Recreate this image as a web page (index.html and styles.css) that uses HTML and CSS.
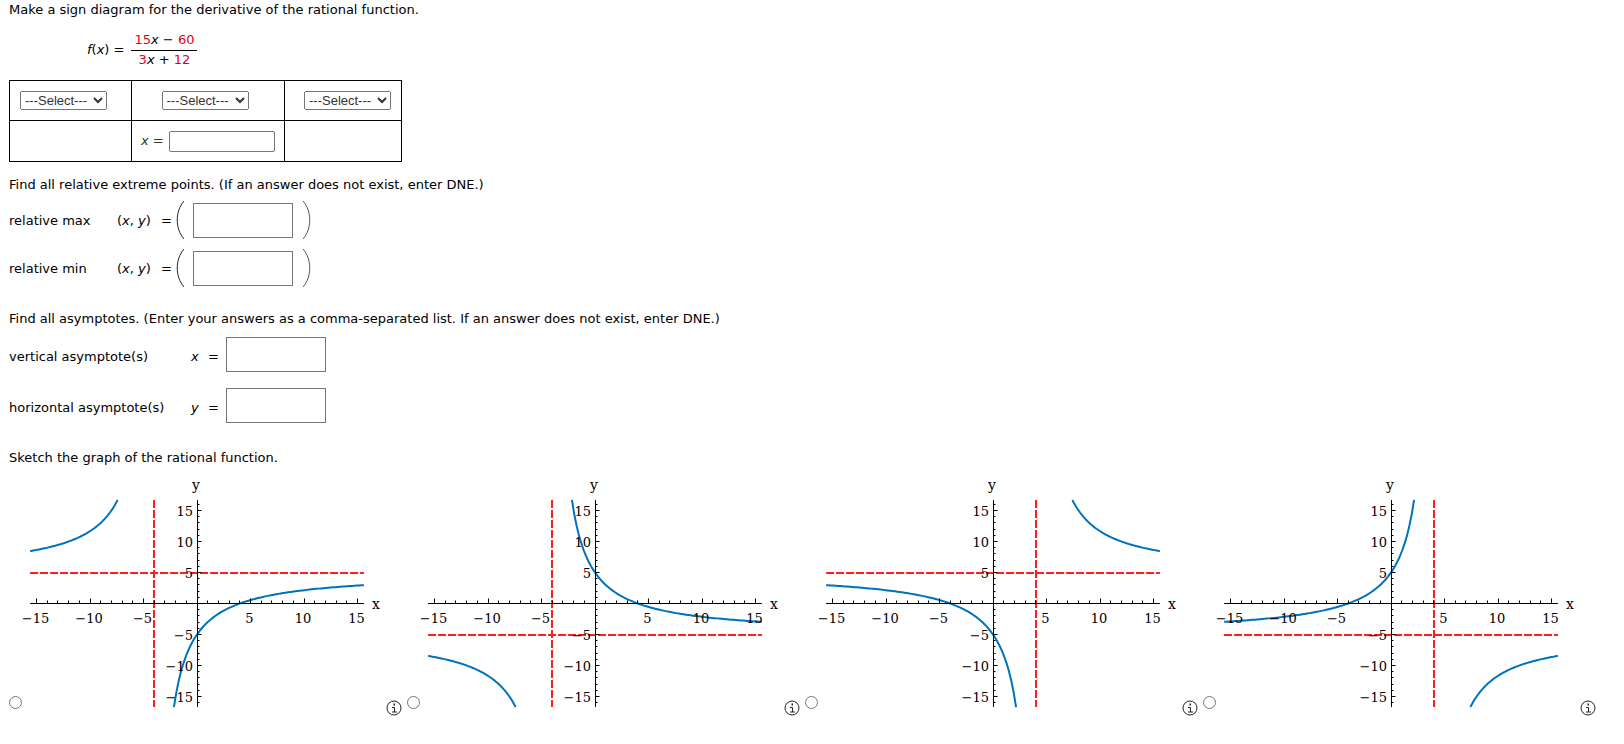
FILE: index.html
```html
<!DOCTYPE html>
<html lang="en">
<head>
<meta charset="utf-8">
<title>Sign diagram for the derivative</title>
<link rel="stylesheet" href="styles.css">
</head>
<body>
<main class="question">
  <p class="prompt">Make a sign diagram for the derivative of the rational function.</p>
  <div class="equation">
    <span><i>f</i>(<i>x</i>) =</span>
    <span class="fraction">
      <span class="numerator"><b>15</b><i>x</i> − <b>60</b></span>
      <span class="denominator"><b>3</b><i>x</i> + <b>12</b></span>
    </span>
  </div>

  <table class="signs">
    <tr>
      <td class="left"><select aria-label="Sign on the left interval"><option>---Select---</option></select></td>
      <td class="middle"><select aria-label="Behavior at the critical value"><option>---Select---</option></select></td>
      <td class="right"><select aria-label="Sign on the right interval"><option>---Select---</option></select></td>
    </tr>
    <tr class="values">
      <td></td>
      <td><div class="critical"><label for="critical"><i>x</i> =</label><input id="critical" type="text"></div></td>
      <td></td>
    </tr>
  </table>

  <p class="prompt extremes-prompt">Find all relative extreme points. (If an answer does not exist, enter DNE.)</p>
  <div class="extremes">
    <div class="point">
      <label class="point-label" for="max">relative max</label>
      <span class="pair">(<i>x</i>, <i>y</i>)</span>
      <span class="equals">=</span>
      <svg class="paren" viewBox="0 0 9 40" aria-hidden="true"><path d="M8 1C-1 11-1 29 8 39"/></svg>
      <input class="answer" id="max" type="text">
      <svg class="paren close" viewBox="0 0 9 40" aria-hidden="true"><path d="M1 1C10 11 10 29 1 39"/></svg>
    </div>
    <div class="point">
      <label class="point-label" for="min">relative min</label>
      <span class="pair">(<i>x</i>, <i>y</i>)</span>
      <span class="equals">=</span>
      <svg class="paren" viewBox="0 0 9 40" aria-hidden="true"><path d="M8 1C-1 11-1 29 8 39"/></svg>
      <input class="answer" id="min" type="text">
      <svg class="paren close" viewBox="0 0 9 40" aria-hidden="true"><path d="M1 1C10 11 10 29 1 39"/></svg>
    </div>
  </div>

  <p class="prompt asymptotes-prompt">Find all asymptotes. (Enter your answers as a comma-separated list. If an answer does not exist, enter DNE.)</p>
  <div class="asymptotes">
    <label for="vertical">vertical asymptote(s)</label><span class="variable"><i>x</i></span><span>=</span><input class="answer" id="vertical" type="text">
    <label for="horizontal">horizontal asymptote(s)</label><span class="variable"><i>y</i></span><span>=</span><input class="answer" id="horizontal" type="text">
  </div>

  <p class="prompt graph-prompt">Sketch the graph of the rational function.</p>
  <div class="choices" id="choices"></div>
</main>
<script src="graphs.js"></script>
</body>
</html>
```
FILE: styles.css
```css
body {
  margin: 0;
  background: #fff;
  color: #000;
  font: 13px/18px "DejaVu Sans", Verdana, sans-serif;
}

.question {
  padding: 1px 9px 24px;
}

.prompt {
  margin: 0;
}

.equation {
  display: flex;
  align-items: center;
  gap: 7px;
  margin: 12px 0 11px 78px;
}

.fraction {
  display: flex;
  flex-direction: column;
  text-align: center;
}

.fraction b {
  color: #e00016;
  font-weight: normal;
}

.numerator {
  padding: 0 3px 1px;
  border-bottom: 1px solid #000;
}

.signs {
  border-collapse: collapse;
  color: #333;
}

.signs td {
  box-sizing: border-box;
  height: 40px;
  padding: 0 9px;
  border: 1px solid #000;
}

.signs .values td {
  height: 41px;
}

.signs .left {
  width: 122px;
  padding-left: 10px;
}

.signs .middle {
  width: 153px;
  padding-right: 15px;
  text-align: center;
}

.signs .right {
  width: 117px;
  padding-right: 10px;
  text-align: right;
}

.signs select {
  width: 87px;
  height: 19px;
  color: #333;
  font: 13px "Liberation Sans", Arial, sans-serif;
}

.critical {
  display: flex;
  align-items: center;
  justify-content: space-between;
}

.critical input {
  box-sizing: border-box;
  width: 106px;
  height: 21px;
  border: 1px solid #767676;
  border-radius: 2px;
}

.extremes-prompt {
  margin-top: 14px;
}

.extremes {
  display: flex;
  flex-direction: column;
  gap: 8px;
  margin-top: 6px;
}

.point {
  display: flex;
  align-items: center;
}

.point label,
.point span {
  padding-top: 2px;
}

.point-label {
  width: 108px;
}

.pair {
  width: 44px;
}

.equals {
  width: 15px;
}

.paren {
  width: 9px;
  height: 40px;
  fill: none;
  stroke: #222;
}

.close {
  stroke: #555;
}

.answer {
  box-sizing: border-box;
  width: 100px;
  height: 35px;
  border: 1px solid #767676;
  border-radius: 0;
}

.point .answer {
  margin: 0 9px 0 8px;
}

.asymptotes-prompt {
  margin-top: 22px;
}

.asymptotes {
  display: grid;
  grid-template-columns: 182px 17px 18px 100px;
  align-items: center;
  row-gap: 16px;
  margin-top: 9px;
}

.asymptotes label,
.asymptotes span {
  padding-top: 4px;
}

.graph-prompt {
  margin-top: 26px;
}

.choices {
  display: flex;
  flex-wrap: wrap;
  gap: 5px;
  margin-top: 9px;
}

.choice {
  display: flex;
  align-items: flex-end;
}

.choice input {
  width: 13px;
  height: 13px;
  margin: 0 0 7px;
}

.graph {
  width: 364px;
  height: 240px;
  overflow: visible;
  font: 13px "DejaVu Serif", serif;
}

.graph .axis {
  fill: none;
  stroke: #000;
}

.graph .curve {
  fill: none;
  stroke: #0072bd;
  stroke-width: 2;
}

.graph .asymptote {
  stroke: #ff1c1c;
  stroke-width: 2;
  stroke-dasharray: 8 2;
}

.graph .name {
  font-size: 14px;
}

.info {
  width: 16px;
  height: 16px;
  padding: 0;
  border: 0;
  background: none;
}

.info svg {
  display: block;
  fill: none;
  stroke: #222;
}
```
FILE: graphs.js
```js
const ORIGIN = { x: 175, y: 127.5 };
const UNIT = { x: 10.7, y: 6.2 };
const LIMIT = { x: 15.6, y: 16.7 };

const graphs = [
  { h: 1, v: 1 },
  { h: 1, v: -1 },
  { h: -1, v: 1 },
  { h: -1, v: -1 }
];

const px = x => ORIGIN.x + x * UNIT.x;
const py = y => ORIGIN.y - y * UNIT.y;
const crisp = n => Math.floor(n) + 0.5;

// Points of y = 5(x - 4)/(x + 4), mirrored by h and v.
function branch(from, to, h, v) {
  const points = [];
  for (let i = 0; i <= 80; i++) {
    const x = from + (to - from) * i / 80;
    const y = 5 * (x - 4) / (x + 4);
    points.push(px(h * x).toFixed(2) + " " + py(v * y).toFixed(2));
  }
  return "M" + points.join("L");
}

function axes() {
  const middle = crisp(ORIGIN.x);
  let d = `M${px(-LIMIT.x)} ${ORIGIN.y}H${px(LIMIT.x)}M${middle} ${py(LIMIT.y)}V${py(-LIMIT.y)}`;
  for (let i = -15; i <= 15; i++) {
    d += `M${crisp(px(i))} ${ORIGIN.y}v${i % 5 ? -3 : -5}`;
  }
  for (let i = -16; i <= 16; i++) {
    d += `M${middle} ${crisp(py(i))}h${i % 5 ? 2 : 4}`;
  }
  return d;
}

function labels() {
  let text = "";
  for (const n of [-15, -10, -5, 5, 10, 15]) {
    const label = String(n).replace("-", "−");
    text += `<text x="${px(n) - 1}" y="147" text-anchor="middle">${label}</text>`;
    text += `<text x="171" y="${Math.round(py(n)) + 5}" text-anchor="end">${label}</text>`;
  }
  return text + '<text class="name" x="170" y="14">y</text><text class="name" x="350" y="133">x</text>';
}

function graph({ h, v }) {
  const left = -4 - 40 / (LIMIT.y - 5);
  const right = -4 + 40 / (LIMIT.y + 5);
  return `<svg class="graph" viewBox="0 0 364 240" role="img">
    <path class="asymptote" d="M${px(-LIMIT.x)} ${Math.round(py(5 * v))}H${px(LIMIT.x)}M${Math.round(px(-4 * h))} ${py(LIMIT.y)}V${py(-LIMIT.y)}"/>
    <path class="curve" d="${branch(-LIMIT.x, left, h, v)}${branch(right, LIMIT.x, h, v)}"/>
    <path class="axis" d="${axes()}"/>${labels()}</svg>`;
}

document.getElementById("choices").innerHTML = graphs.map((g, i) => `
  <div class="choice">
    <input type="radio" name="graph" aria-label="Graph ${i + 1}">
    ${graph(g)}
    <button class="info" type="button" aria-label="Graph description">
      <svg width="16" height="16" viewBox="0 0 16 16"><circle cx="8" cy="8" r="7"/><path d="M6 7.500h2.500v4.500M6 12h5"/><path d="M7.500 4.500h1.500" stroke-width="2"/></svg>
    </button>
  </div>`).join("");
```
